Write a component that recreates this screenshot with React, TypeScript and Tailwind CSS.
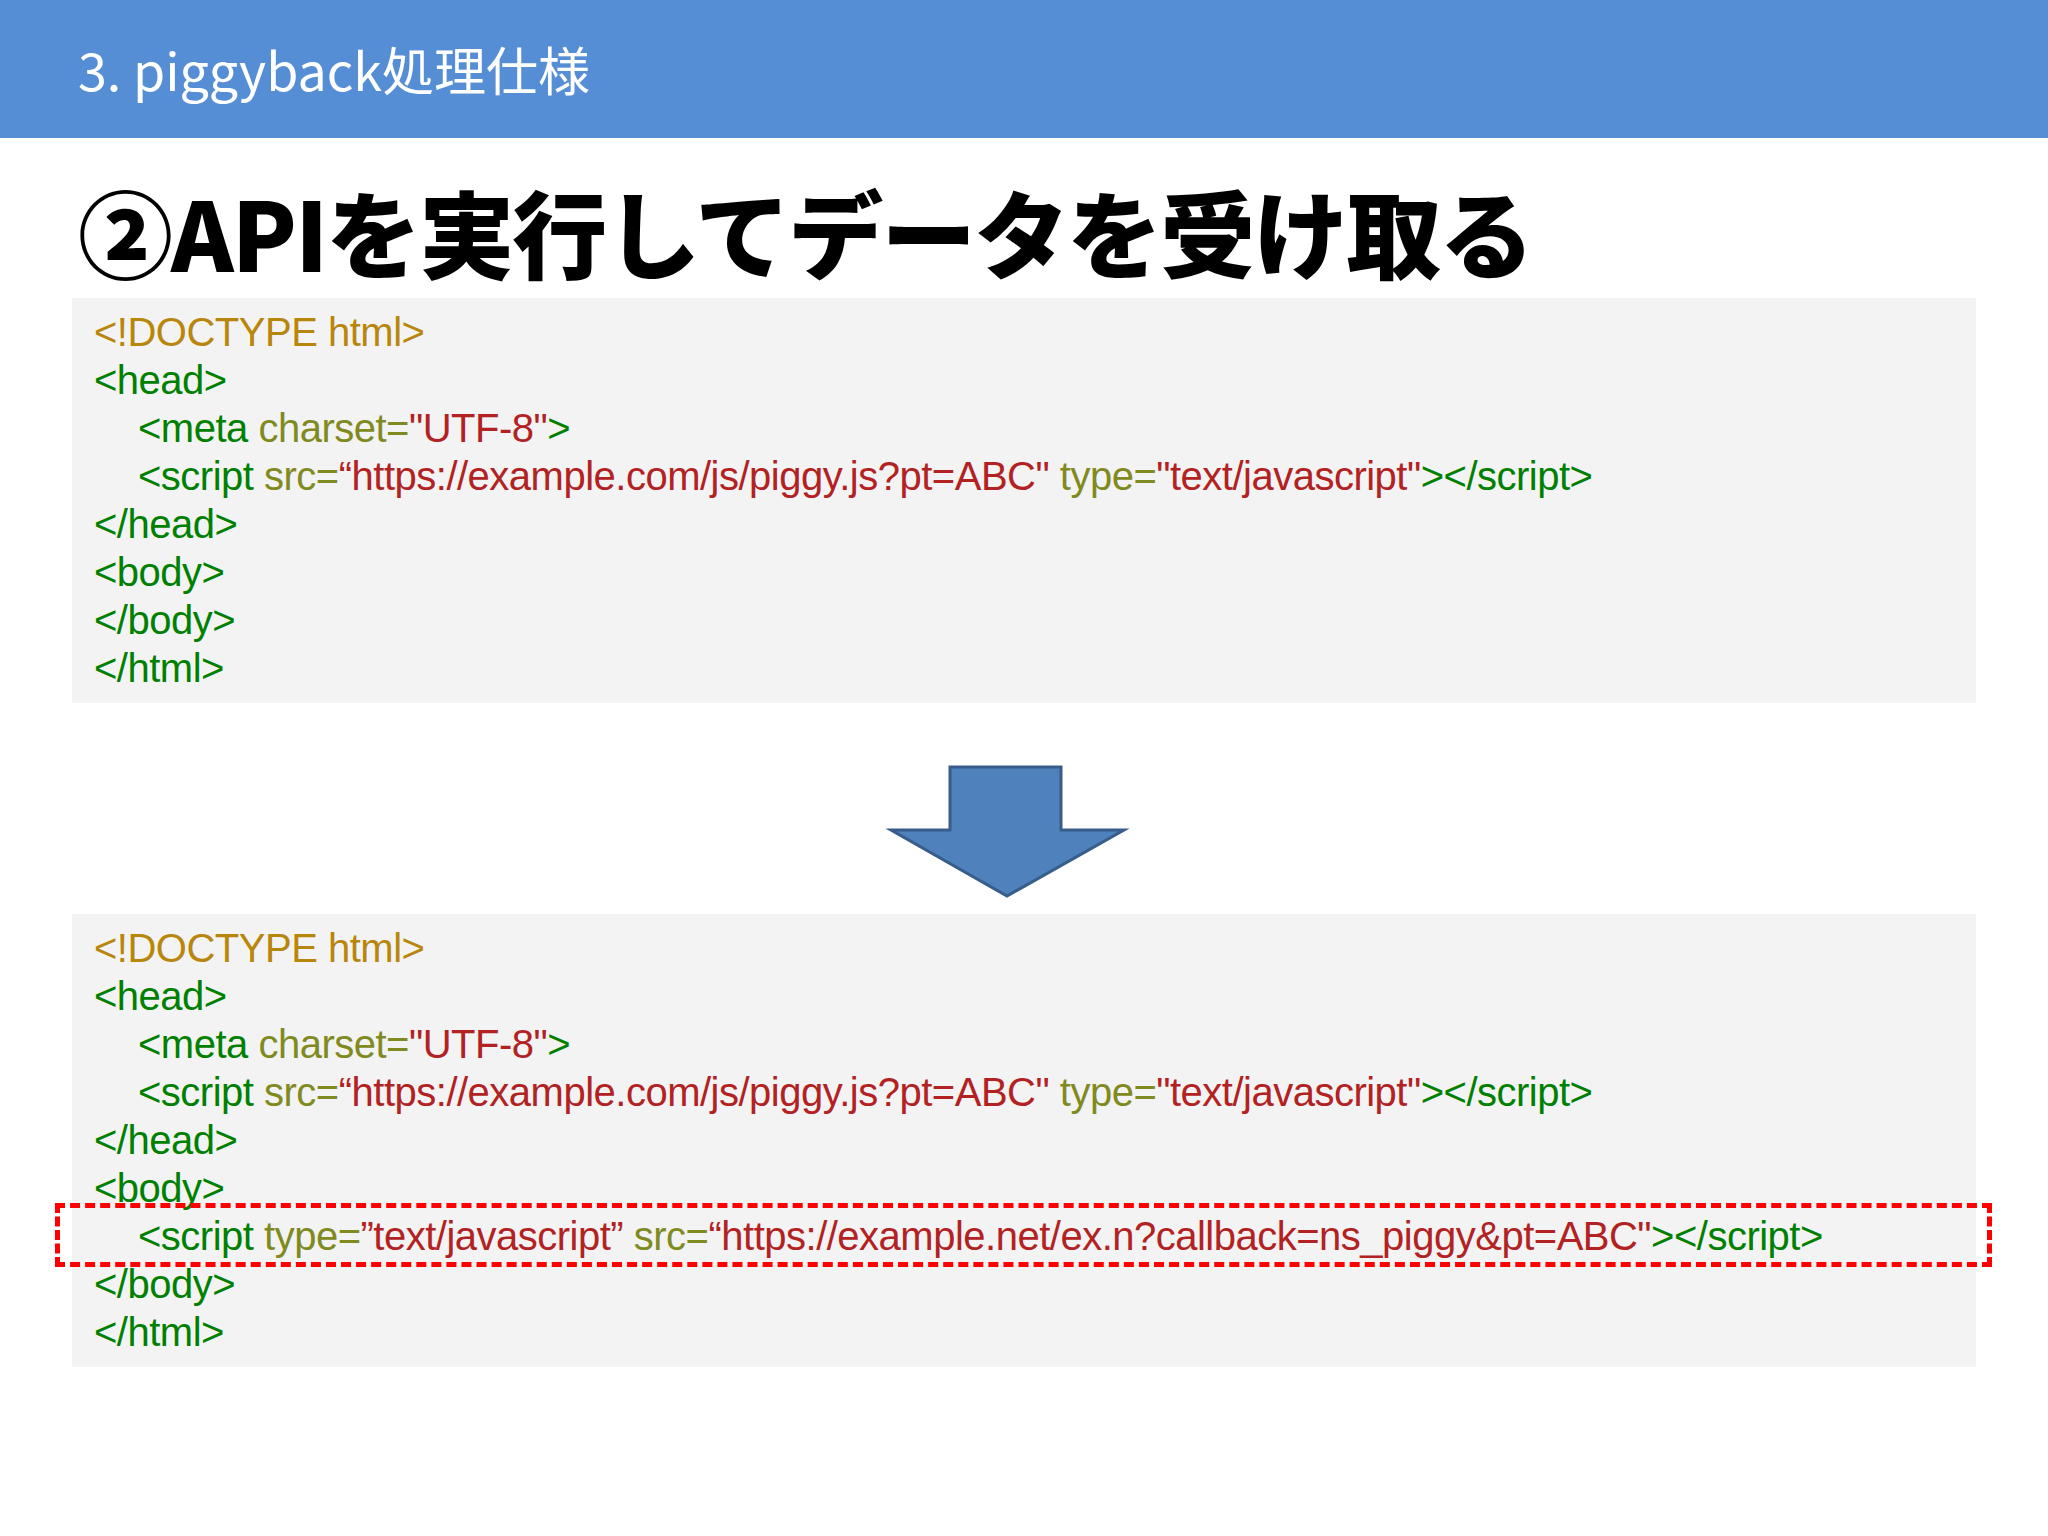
import React from "react";

const G = ({ c }: { c: string }) => <span className="text-[#008000]">{c}</span>;
const A = ({ c }: { c: string }) => <span className="text-[#808a1f]">{c}</span>;
const V = ({ c }: { c: string }) => <span className="text-[#b22222]">{c}</span>;
const D = ({ c }: { c: string }) => <span className="text-[#b8860b]">{c}</span>;

const Line = ({ indent, children }: { indent?: boolean; children: React.ReactNode }) => (
  <div className={"h-[48px] leading-[48px] whitespace-nowrap " + (indent ? "pl-[44px]" : "")}>{children}</div>
);

const Head = () => (
  <>
    <Line><D c="<!DOCTYPE html>" /></Line>
    <Line><G c="<head>" /></Line>
    <Line indent><G c="<meta" /><A c=" charset=" /><V c={'"UTF-8"'} /><G c=">" /></Line>
    <Line indent>
      <G c="<script" /><A c=" src=" /><V c={"“https://example.com/js/piggy.js?pt=ABC\""} />
      <A c=" type=" /><V c={'"text/javascript"'} /><G c="></script>" />
    </Line>
    <Line><G c="</head>" /></Line>
  </>
);

export default function App() {
  return (
    <div className="w-[2048px] h-[1536px] bg-white relative" style={{ fontFamily: '"Liberation Sans", Arial, sans-serif' }}>
      <div className="h-[138px] bg-[#558ed5] flex items-center pl-[78px]">
        <span className="text-white text-[52px]" style={{ fontFamily: '"Noto Sans CJK JP", "Noto Sans", sans-serif' }}>
          3. piggyback処理仕様
        </span>
      </div>
      <div className="h-[160px] flex items-center pl-[78px] pt-[26px]">
        <span className="text-black text-[95px] font-black tracking-[-2px]" style={{ fontFamily: '"Noto Sans CJK JP", sans-serif' }}>
          ②APIを実行してデータを受け取る
        </span>
      </div>
      <div className="mx-[72px] w-[1904px] h-[405px] bg-[#f3f3f4] pt-[10px] pl-[22px] text-[40px] tracking-[-0.5px]">
        <Head />
        <Line><G c="<body>" /></Line>
        <Line><G c="</body>" /></Line>
        <Line><G c="</html>" /></Line>
      </div>
      <div className="h-[211px] flex items-center justify-center pt-[46px]">
        <svg width="250" height="136" viewBox="0 0 250 136" className="mr-[32px]">
          <polygon points="67,3 178,3 178,66 241,66 124,132 8,66 67,66" fill="#4f81bd" stroke="#385d8a" strokeWidth="3" />
        </svg>
      </div>
      <div className="mx-[72px] w-[1904px] h-[453px] bg-[#f3f3f4] pt-[10px] pl-[22px] text-[40px] tracking-[-0.5px]">
        <Head />
        <Line><G c="<body>" /></Line>
        <Line indent>
          <G c="<script" /><A c=" type=" /><V c="”text/javascript”" /><A c=" src=" />
          <V c={"“https://example.net/ex.n?callback=ns_piggy&pt=ABC\""} /><G c="></script>" />
        </Line>
        <Line><G c="</body>" /></Line>
        <Line><G c="</html>" /></Line>
      </div>
      <div className="absolute left-[55px] top-[1203px] w-[1937px] h-[64px] border-[5px] border-dashed border-[#ff0000]" />
    </div>
  );
}
